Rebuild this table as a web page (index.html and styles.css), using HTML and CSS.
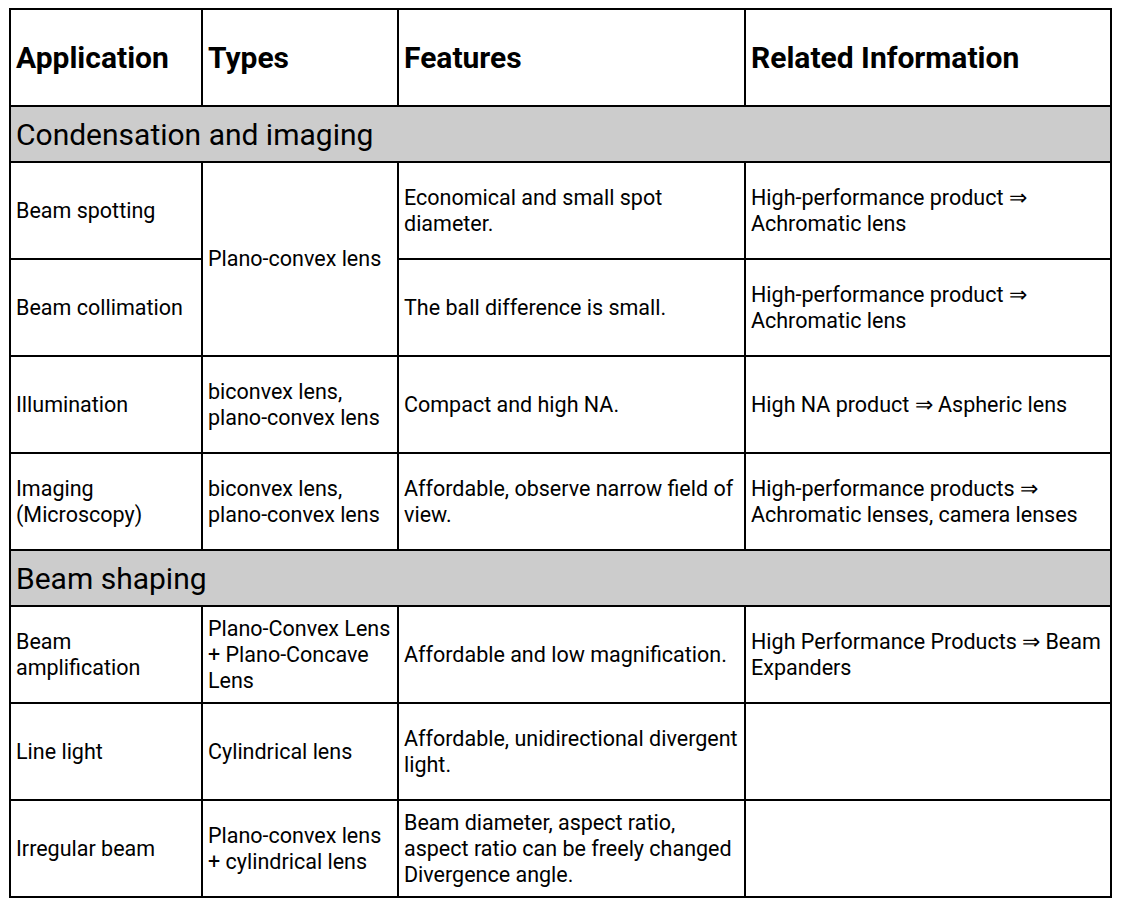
FILE: index.html
```html
<!DOCTYPE html>
<html lang="en">
<head>
<meta charset="utf-8">
<title>Lens applications</title>
<link rel="stylesheet" href="styles.css">
</head>
<body>
<table class="lens-table">
  <colgroup>
    <col class="c1"><col class="c2"><col class="c3"><col class="c4">
  </colgroup>
  <thead>
    <tr class="head-row">
      <th>Application</th>
      <th>Types</th>
      <th>Features</th>
      <th>Related Information</th>
    </tr>
  </thead>
  <tbody>
    <tr class="group-row"><td colspan="4">Condensation and imaging</td></tr>
    <tr class="data-row">
      <td>Beam spotting</td>
      <td rowspan="2">Plano-convex lens</td>
      <td>Economical and small spot diameter.</td>
      <td>High-performance product ⇒ Achromatic lens</td>
    </tr>
    <tr class="data-row">
      <td>Beam collimation</td>
      <td>The ball difference is small.</td>
      <td>High-performance product ⇒ Achromatic lens</td>
    </tr>
    <tr class="data-row">
      <td>Illumination</td>
      <td>biconvex lens, plano-convex lens</td>
      <td>Compact and high NA.</td>
      <td>High NA product ⇒ Aspheric lens</td>
    </tr>
    <tr class="data-row">
      <td>Imaging (Microscopy)</td>
      <td>biconvex lens, plano-convex lens</td>
      <td>Affordable, observe narrow field of view.</td>
      <td>High-performance products ⇒ Achromatic lenses, camera lenses</td>
    </tr>
    <tr class="group-row"><td colspan="4">Beam shaping</td></tr>
    <tr class="data-row">
      <td>Beam amplification</td>
      <td>Plano-Convex Lens + Plano-Concave Lens</td>
      <td>Affordable and low magnification.</td>
      <td>High Performance Products ⇒ Beam Expanders</td>
    </tr>
    <tr class="data-row">
      <td>Line light</td>
      <td>Cylindrical lens</td>
      <td>Affordable, unidirectional divergent light.</td>
      <td></td>
    </tr>
    <tr class="data-row">
      <td>Irregular beam</td>
      <td>Plano-convex lens + cylindrical lens</td>
      <td>Beam diameter, aspect ratio, aspect ratio can be freely changed Divergence angle.</td>
      <td></td>
    </tr>
  </tbody>
</table>
</body>
</html>
```
FILE: styles.css
```css
html, body {
  margin: 0;
  padding: 0;
  background: #fff;
}
body {
  padding: 8px 0 0 9px;
  font-family: Roboto, "Liberation Sans", Arial, sans-serif;
  color: #000;
}
.lens-table {
  border-collapse: collapse;
  table-layout: fixed;
  width: 1101px;
  border: 2px solid #000;
}
.c1 { width: 192px; }
.c2 { width: 196px; }
.c3 { width: 347px; }
.c4 { width: 366px; }
.lens-table th,
.lens-table td {
  border: 2px solid #000;
  padding: 0 5px;
  vertical-align: middle;
  text-align: left;
}
.lens-table th {
  font-size: 30px;
  font-weight: 700;
  line-height: 35px;
}
.head-row { height: 97px; }
.group-row { height: 56px; }
.group-row td {
  background: #cccccc;
  font-size: 30px;
  line-height: 35px;
}
.data-row { height: 97px; }
.data-row td {
  font-size: 21.5px;
  line-height: 26px;
}
```
